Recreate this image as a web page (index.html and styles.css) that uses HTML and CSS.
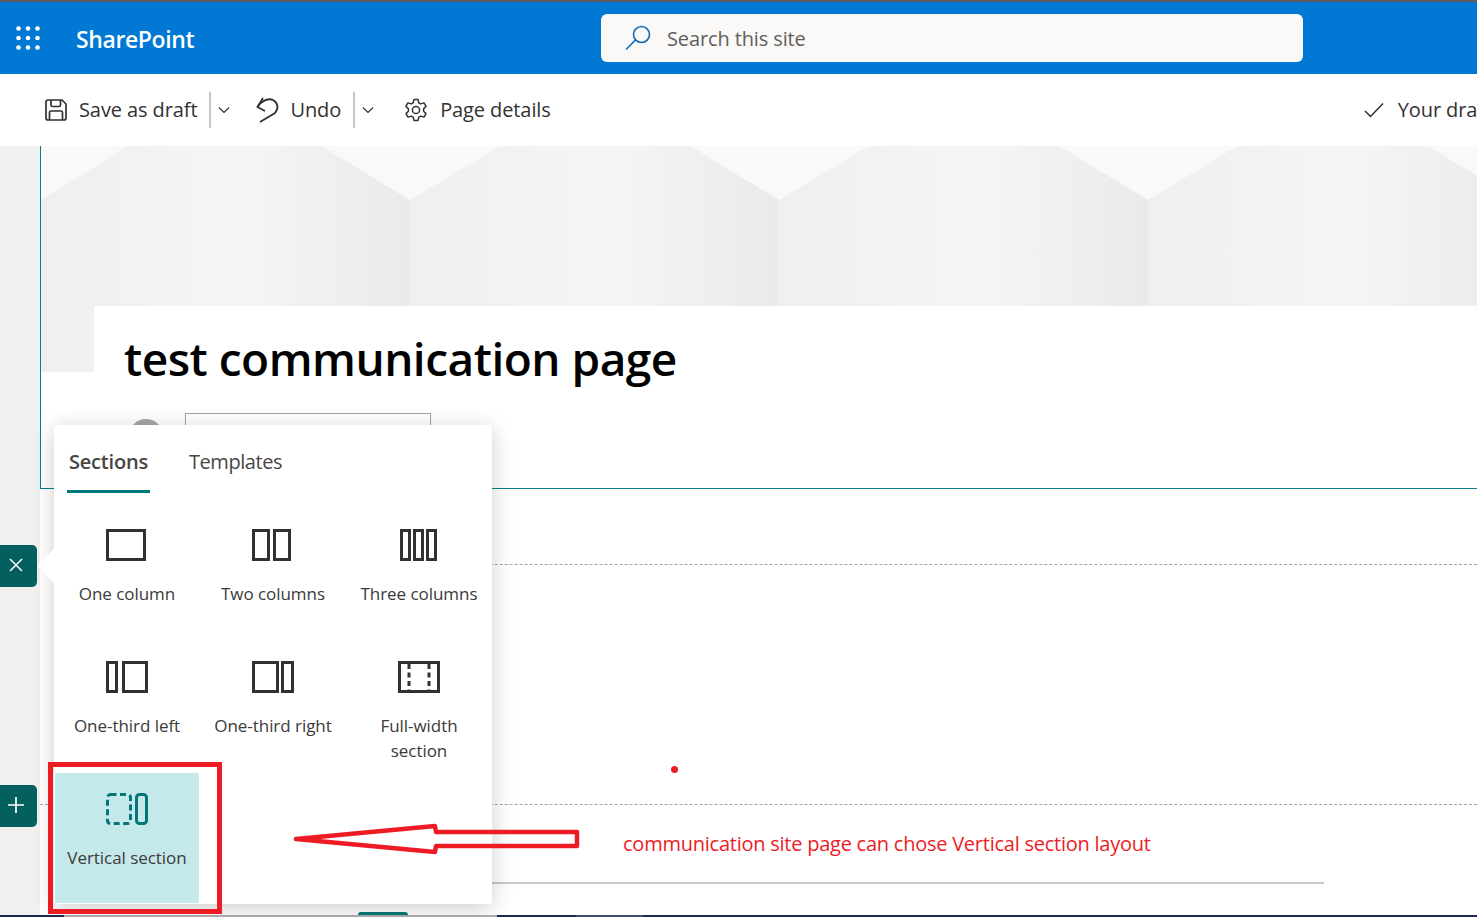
FILE: index.html
```html
<!DOCTYPE html>
<html>
<head>
    <meta charset="utf-8" />
    <title>test communication page</title>
    <meta name="viewport" content="width=device-width, initial-scale=1">
    <link rel="stylesheet" href="styles.css">
</head>
<body>
    <div class="suitebar">
        <div class="brand">
            <svg class="waffle" width="24" height="24" viewBox="0 0 24 24" fill="#fff">
                <circle cx="2.5" cy="2.5" r="2.3"/><circle cx="12" cy="2.5" r="2.3"/><circle cx="21.5" cy="2.5" r="2.3"/>
                <circle cx="2.5" cy="12" r="2.3"/><circle cx="12" cy="12" r="2.3"/><circle cx="21.5" cy="12" r="2.3"/>
                <circle cx="2.5" cy="21.5" r="2.3"/><circle cx="12" cy="21.5" r="2.3"/><circle cx="21.5" cy="21.5" r="2.3"/>
            </svg>
            <span class="brand-name">SharePoint</span>
        </div>
        <div class="search">
            <svg class="search-icon" width="28" height="28" viewBox="0 0 28 28" fill="none" stroke="#0f6cbd" stroke-width="1.6">
                <circle cx="16.5" cy="10.5" r="8"/>
                <path d="M10.5 16 1.5 25" stroke-linecap="round"/>
            </svg>
            <span>Search this site</span>
        </div>
    </div>

    <div class="toolbar">
        <svg class="tool-icon" width="24" height="24" viewBox="0 0 24 24" fill="none" stroke="#323130" stroke-width="1.7">
            <path d="M4 2h14l4 4v14a2 2 0 0 1-2 2H4a2 2 0 0 1-2-2V4a2 2 0 0 1 2-2z"/>
            <path d="M7 2v5a1.500 1.500 0 0 0 1.500 1.500h6.500A1.500 1.500 0 0 0 16.500 7V2"/>
            <path d="M5.500 22v-7.500A1.500 1.500 0 0 1 7 13h10a1.500 1.500 0 0 1 1.500 1.500V22"/>
        </svg>
        <span class="tool-label">Save as draft</span>
        <span class="tool-sep"></span>
        <svg class="chevron" width="12" height="8" viewBox="0 0 12 8" fill="none" stroke="#323130" stroke-width="1.200"><path d="M1 1.500 6 6.500 11 1.500"/></svg>
        <svg class="tool-icon undo" width="24" height="26" viewBox="0 0 24 26" fill="none" stroke="#323130" stroke-width="1.800">
            <path d="M7 1 1.500 10 9 14"/>
            <path d="M1.500 10C6 3 13 1 17 3 22 6 23 11 19 16L4 25"/>
        </svg>
        <span class="tool-label">Undo</span>
        <span class="tool-sep"></span>
        <svg class="chevron" width="12" height="8" viewBox="0 0 12 8" fill="none" stroke="#323130" stroke-width="1.200"><path d="M1 1.500 6 6.500 11 1.500"/></svg>
        <svg class="tool-icon gear" width="24" height="24" viewBox="0 0 24 24" fill="none" stroke="#323130" stroke-width="1.500">
            <circle cx="12" cy="12" r="3.600"/>
            <path d="M10 1.500h4l.8 3.300 2 1.100 3.200-1 2 3.500-2.400 2.300v2.600l2.400 2.300-2 3.500-3.200-1-2 1.100-.8 3.300h-4l-.8-3.300-2-1.100-3.200 1-2-3.500 2.400-2.300v-2.600L1.900 8.400l2-3.500 3.200 1 2-1.100z" stroke-linejoin="round"/>
        </svg>
        <span class="tool-label">Page details</span>
        <div class="save-status">
            <svg width="20" height="16" viewBox="0 0 20 16" fill="none" stroke="#323130" stroke-width="1.500"><path d="M1 9l5.500 5.500L19 1.500"/></svg>
            <span class="tool-label">Your draft</span>
        </div>
    </div>

    <div class="canvas">
        <div class="gutter"></div>
        <div class="page">
            <div class="page-head">
                <svg class="hero" width="1436" height="226" viewBox="0 0 1436 226" preserveAspectRatio="none">
                    <defs>
                        <linearGradient id="tile" x1="0" x2="1" y1="0" y2="0">
                            <stop offset="0" stop-color="#efefef"/>
                            <stop offset="0.45" stop-color="#f4f4f4"/>
                            <stop offset="0.55" stop-color="#f5f5f5"/>
                            <stop offset="1" stop-color="#eaeaea"/>
                        </linearGradient>
                    </defs>
                    <rect x="0" y="0" width="369" height="226" fill="url(#tile)"/>
                    <rect x="369" y="0" width="369" height="226" fill="url(#tile)"/>
                    <rect x="738" y="0" width="369" height="226" fill="url(#tile)"/>
                    <rect x="1107" y="0" width="369" height="226" fill="url(#tile)"/>
                    <g fill="#f9f9f9">
                        <polygon points="0,0 87,0 0,54"/>
                        <polygon points="280,0 369,54 459,0"/>
                        <polygon points="649,0 738,54 828,0"/>
                        <polygon points="1018,0 1107,54 1197,0"/>
                        <polygon points="1387,0 1476,54 1566,0"/>
                    </g>
                </svg>
                <div class="title-block">
                    <h1>test communication page</h1>
                    <div class="byline">
                        <span class="avatar"></span>
                        <span class="author-box"></span>
                    </div>
                </div>
            </div>
            <div class="section section-one"></div>
            <div class="section section-two"></div>
            <div class="section-last">
                <div class="rule"></div>
                <span class="bump"></span>
            </div>
        </div>
    </div>
    <div class="taskbar"><span class="task-gray"></span><span class="task-active"></span></div>

    <button class="section-btn close-btn">
        <svg width="14" height="14" viewBox="0 0 14 14" stroke="#fff" stroke-width="1.500"><path d="M1 1l12 12M13 1 1 13"/></svg>
    </button>
    <button class="section-btn add-btn">
        <svg width="18" height="18" viewBox="0 0 18 18" stroke="#fff" stroke-width="1.700"><path d="M9 1v16M1 9h16"/></svg>
    </button>

    <div class="panel">
        <span class="beak"></span>
        <div class="tabs">
            <span class="tab tab-on">Sections</span>
            <span class="tab">Templates</span>
        </div>
        <div class="layouts">
            <div class="layout">
                <svg class="layout-icon" width="42" height="34" viewBox="0 0 42 34"><rect x="1.500" y="2.500" width="37" height="29"/></svg>
                <span>One column</span>
            </div>
            <div class="layout">
                <svg class="layout-icon" width="42" height="34" viewBox="0 0 42 34"><rect x="1.500" y="2.500" width="15" height="29"/><rect x="22.500" y="2.500" width="15" height="29"/></svg>
                <span>Two columns</span>
            </div>
            <div class="layout">
                <svg class="layout-icon" width="42" height="34" viewBox="0 0 42 34"><rect x="3.500" y="2.500" width="8" height="29"/><rect x="16.500" y="2.500" width="8" height="29"/><rect x="29.500" y="2.500" width="8" height="29"/></svg>
                <span>Three columns</span>
            </div>
            <div class="layout">
                <svg class="layout-icon" width="42" height="34" viewBox="0 0 42 34"><rect x="1.500" y="2.500" width="9" height="29"/><rect x="17.500" y="2.500" width="23" height="29"/></svg>
                <span>One-third left</span>
            </div>
            <div class="layout">
                <svg class="layout-icon" width="42" height="34" viewBox="0 0 42 34"><rect x="1.500" y="2.500" width="24" height="29"/><rect x="30.500" y="2.500" width="10" height="29"/></svg>
                <span>One-third right</span>
            </div>
            <div class="layout">
                <svg class="layout-icon" width="42" height="34" viewBox="0 0 42 34"><rect x="1.500" y="2.500" width="39" height="29"/><path d="M11 4v26M31 4v26" stroke-dasharray="5 3.500"/></svg>
                <span>Full-width<br>section</span>
            </div>
            <div class="layout layout-on">
                <svg class="layout-icon" width="42" height="34" viewBox="0 0 42 34"><rect x="1.500" y="2.500" width="23" height="29" rx="3" stroke-dasharray="6 3.500"/><rect x="30.500" y="2.500" width="10" height="29" rx="3"/></svg>
                <span>Vertical section</span>
            </div>
        </div>
    </div>

    <!-- red markup added on top of the screenshot -->
    <div class="mark-box"></div>
    <svg class="mark-arrow" width="290" height="34" viewBox="0 0 290 34" fill="none" stroke="#ed1c24" stroke-width="4.500" stroke-linejoin="round">
        <polygon points="4,16 143,3 144,9 285,9 285,23 144,23 143,29"/>
    </svg>
    <span class="mark-dot"></span>
    <span class="mark-text">communication site page can chose Vertical section layout</span>
</body>
</html>
```

FILE: styles.css
```css
* {
    margin: 0;
    padding: 0;
    box-sizing: border-box;
}
html, body {
    height: 917px;
    overflow: hidden;
}
body {
    position: relative;
    background: #fff;
    font-family: "Open Sans", "Noto Sans", sans-serif;
    color: #323130;
}

/* top blue bar */
.suitebar {
    display: grid;
    grid-template-columns: 601px 702px;
    align-items: center;
    height: 74px;
    background: #0078d4;
    border-top: 2px solid #5c5c5c;
}
.brand {
    display: flex;
    align-items: center;
    padding-left: 16px;
}
.brand-name {
    margin: 2px 0 0 36px;
    font-size: 23px;
    font-weight: 600;
    letter-spacing: -0.4px;
    color: #fff;
}
.search {
    display: flex;
    align-items: center;
    height: 48px;
    padding-left: 24px;
    background: #faf9f8;
    border-radius: 6px;
    font-size: 20px;
    letter-spacing: -0.12px;
    color: #605e5c;
}
.search-icon {
    margin-right: 14px;
}

/* command bar */
.toolbar {
    display: flex;
    align-items: center;
    height: 72px;
    padding-left: 44px;
    overflow: hidden;
    white-space: nowrap;
}
.toolbar svg, .toolbar span {
    flex-shrink: 0;
}
.tool-label {
    margin-top: -2px;
    font-size: 20px;
    letter-spacing: -0.1px;
}
.tool-icon {
    margin-right: 11px;
}
.tool-sep {
    width: 2px;
    height: 36px;
    margin: 0 7px 0 12px;
    background: #c8c8c8;
}
.chevron {
    margin-right: 26px;
}
.undo {
    margin-right: 10px;
}
.gear {
    margin: 0 12px 0 4px;
}
.save-status {
    display: flex;
    align-items: center;
    gap: 14px;
    margin-left: 813px;
}

/* page */
.canvas {
    display: flex;
    height: 769px;
}
.gutter {
    width: 40px;
    background: #f0f0f0;
}
.page {
    flex: 1;
    position: relative;
}
.page-head {
    height: 343px;
    border-left: 1px solid #038387;
    border-bottom: 1px solid #038387;
}
.hero {
    display: block;
}
.title-block {
    height: 116px;
    margin: -66px 0 0 53px;
    padding: 19px 0 0 30px;
    position: relative;
    background: #fff;
}
h1 {
    font-size: 46px;
    font-weight: 600;
    line-height: 66px;
    letter-spacing: -0.5px;
    color: #000;
}
.byline {
    display: flex;
    margin: 22px 0 0 1px;
}
.avatar {
    width: 34px;
    height: 34px;
    margin: 6px 22px 0 4px;
    background: #a6a6a6;
    border-radius: 50%;
}
.author-box {
    width: 246px;
    height: 40px;
    border: 1px solid #a0a0a0;
}
.section {
    border-bottom: 1px dashed #a3a3a3;
}
.section-one {
    height: 76px;
}
.section-two {
    height: 240px;
}
.section-last {
    height: 110px;
    padding: 77px 0 0 100px;
    position: relative;
}
.rule {
    width: 1184px;
    height: 2px;
    background: #c8c8c8;
}
.bump {
    position: absolute;
    left: 318px;
    bottom: 0;
    width: 50px;
    height: 3px;
    background: #037a7a;
    border-radius: 25px 25px 0 0;
}
.taskbar {
    display: flex;
    height: 2px;
    background: #1b2a4e;
}
.task-gray {
    width: 433px;
    margin-left: 64px;
    background: #aeaeae;
}
.task-active {
    width: 67px;
    margin-left: 79px;
    background: #44506f;
}

/* floating section buttons */
.section-btn {
    position: absolute;
    left: 0;
    display: flex;
    align-items: center;
    justify-content: center;
    width: 37px;
    height: 42px;
    padding: 0 5px 2px 0;
    background: #03605f;
    border: 0;
    border-radius: 0 5px 5px 0;
}
.close-btn {
    top: 545px;
}
.add-btn {
    top: 785px;
}

/* layout picker */
.panel {
    position: absolute;
    left: 54px;
    top: 425px;
    width: 438px;
    height: 479px;
    background: #fff;
    border-radius: 3px;
    box-shadow: 0 4px 22px rgba(0, 0, 0, 0.2);
}
.beak {
    position: absolute;
    left: -17px;
    top: 124px;
    border-style: solid;
    border-width: 17px 17px 17px 0;
    border-color: transparent #fff transparent transparent;
}
.tabs {
    display: flex;
    height: 68px;
    padding-left: 13px;
    gap: 37px;
}
.tab {
    padding: 23px 2px 0;
    font-size: 20px;
    letter-spacing: -0.45px;
    color: #484644;
}
.tab-on {
    font-weight: 600;
    letter-spacing: -0.2px;
    border-bottom: 3px solid #00797c;
}
.layouts {
    display: grid;
    grid-template-columns: repeat(3, 146px);
    grid-auto-rows: 130px;
    row-gap: 2px;
    margin-top: 16px;
}
.layout {
    display: flex;
    flex-direction: column;
    align-items: center;
    padding-top: 19px;
    font-size: 17px;
    line-height: 25px;
    letter-spacing: -0.05px;
    text-align: center;
    color: #3b3a39;
}
.layout span {
    margin-top: 19px;
}
.layout-icon {
    flex-shrink: 0;
    fill: none;
    stroke: #323130;
    stroke-width: 3;
}
.layout-on {
    margin: 0 1px;
    background: #c5e8ea;
    border-radius: 2px;
}
.layout-on .layout-icon {
    stroke: #05757a;
}

/* annotations */
.mark-box {
    position: absolute;
    left: 48px;
    top: 762px;
    width: 174px;
    height: 152px;
    border: 5px solid #ed1c24;
}
.mark-arrow {
    position: absolute;
    left: 292px;
    top: 823px;
}
.mark-dot {
    position: absolute;
    left: 671px;
    top: 766px;
    width: 7px;
    height: 7px;
    background: #ed1c24;
    border-radius: 50%;
}
.mark-text {
    position: absolute;
    left: 623px;
    top: 830px;
    font-size: 20px;
    letter-spacing: -0.24px;
    white-space: nowrap;
    color: #ed1c24;
}
```
